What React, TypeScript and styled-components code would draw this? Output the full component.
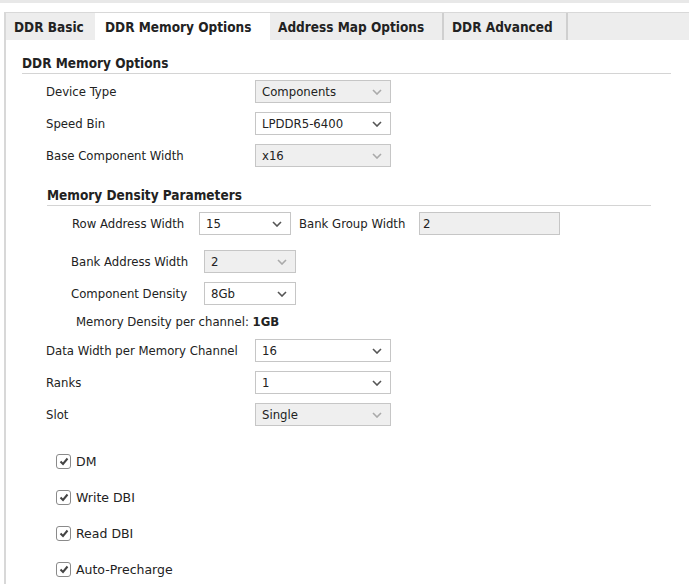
import React from "react";
import styled, { createGlobalStyle } from "styled-components";

const G = createGlobalStyle`
  body { margin: 0; background: #fff; font-family: "DejaVu Sans Condensed", "DejaVu Sans", sans-serif; font-size: 13px; color: #222; }
`;
const Top = styled.div`height: 3px; background: #e8e8e8; margin-bottom: 9px;`;
const Panel = styled.div`margin-left: 4px; border-left: 2px solid #d8d8d8; border-top: 1px solid #d8d8d8; height: 572px;`;
const Tabs = styled.div`display: flex; height: 27px; background: #ededed; align-items: stretch;`;
const Tab = styled.div<{ $active?: boolean; $w: number; $sep?: boolean }>`
  width: ${p => p.$w}px; box-sizing: border-box; padding-left: ${p => (p.$active ? 10 : 8)}px;
  display: flex; align-items: center; font-weight: bold; font-size: 13.5px; color: #222;
  background: ${p => (p.$active ? "#fff" : "transparent")};
  border-right: ${p => (p.$sep ? "2px solid #cfcfcf" : "none")};
`;
const Body = styled.div`padding: 15px 18px 0 14px;`;
const H = styled.div<{ $ml: number; $w: number }>`
  margin-left: ${p => p.$ml}px; width: ${p => p.$w}px; font-weight: bold; font-size: 13.5px;
  border-bottom: 1px solid #d4d4d4; padding-bottom: 2px;
`;
const Row = styled.div<{ $ml: number; $mt: number }>`
  display: flex; align-items: center; margin-left: ${p => p.$ml}px; margin-top: ${p => p.$mt}px; height: 23px;
`;
const Label = styled.div<{ $w: number }>`width: ${p => p.$w}px; white-space: nowrap;`;
const Sel = styled.div<{ $w: number; $dis?: boolean }>`
  width: ${p => p.$w}px; height: 23px; box-sizing: border-box; border: 1px solid #c6c6c6;
  background: ${p => (p.$dis ? "#efefef" : "#fff")}; display: flex; align-items: center;
  justify-content: space-between; padding: 0 8px 0 6px;
`;
const Input = styled.div`width: 141px; height: 23px; box-sizing: border-box; border: 1px solid #c6c6c6; background: #efefef; padding: 3px 3px;`;
const Info = styled.div`margin: 9px 0 0 56px;`;
const Check = styled.div`display: flex; align-items: center; gap: 5px; margin: 0 0 0 36px; height: 36px; font-family: "DejaVu Sans", sans-serif; font-size: 12.5px;`;
const Box = styled.div`width: 13px; height: 13px; border: 1px solid #8a8a8a; border-radius: 3px; display: flex; align-items: center; justify-content: center; background: #fff;`;

const Chev = ({ dis }: { dis?: boolean }) => (
  <svg width="10" height="6" viewBox="0 0 10 6"><path d="M1 1l4 4 4-4" fill="none" stroke={dis ? "#aaa" : "#555"} strokeWidth="1.6" /></svg>
);
const S = ({ w, v, dis }: { w: number; v: string; dis?: boolean }) => (
  <Sel $w={w} $dis={dis}><span>{v}</span><Chev dis={dis} /></Sel>
);
const CB = ({ t }: { t: string }) => (
  <Check><Box><svg width="10" height="9" viewBox="0 0 10 9"><path d="M1.5 4.5l2.5 2.5 4.5-5.5" fill="none" stroke="#444" strokeWidth="2" /></svg></Box>{t}</Check>
);

export default function App() {
  return (
    <>
      <G />
      <Top />
      <Panel>
        <Tabs>
          <Tab $w={89}>DDR Basic</Tab>
          <Tab $w={175} $active>DDR Memory Options</Tab>
          <Tab $w={174} $sep>Address Map Options</Tab>
          <Tab $w={124} $sep>DDR Advanced</Tab>
        </Tabs>
        <Body>
          <H $ml={2} $w={649}>DDR Memory Options</H>
          <Row $ml={26} $mt={6}><Label $w={209}>Device Type</Label><S w={136} v="Components" dis /></Row>
          <Row $ml={26} $mt={9}><Label $w={209}>Speed Bin</Label><S w={136} v="LPDDR5-6400" /></Row>
          <Row $ml={26} $mt={9}><Label $w={209}>Base Component Width</Label><S w={136} v="x16" dis /></Row>
          <H $ml={27} $w={604} style={{ marginTop: 20 }}>Memory Density Parameters</H>
          <Row $ml={52} $mt={6}><Label $w={127}>Row Address Width</Label><S w={92} v="15" />
            <Label $w={120} style={{ marginLeft: 8 }}>Bank Group Width</Label><Input>2</Input></Row>
          <Row $ml={51} $mt={15}><Label $w={133}>Bank Address Width</Label><S w={92} v="2" dis /></Row>
          <Row $ml={51} $mt={9}><Label $w={133}>Component Density</Label><S w={92} v="8Gb" /></Row>
          <Info>Memory Density per channel: <b>1GB</b></Info>
          <Row $ml={26} $mt={10}><Label $w={209}>Data Width per Memory Channel</Label><S w={136} v="16" /></Row>
          <Row $ml={26} $mt={9}><Label $w={209}>Ranks</Label><S w={136} v="1" /></Row>
          <Row $ml={26} $mt={9}><Label $w={209}>Slot</Label><S w={136} v="Single" dis /></Row>
          <div style={{ marginTop: 17 }}>
            <CB t="DM" /><CB t="Write DBI" /><CB t="Read DBI" /><CB t="Auto-Precharge" />
          </div>
        </Body>
      </Panel>
    </>
  );
}
